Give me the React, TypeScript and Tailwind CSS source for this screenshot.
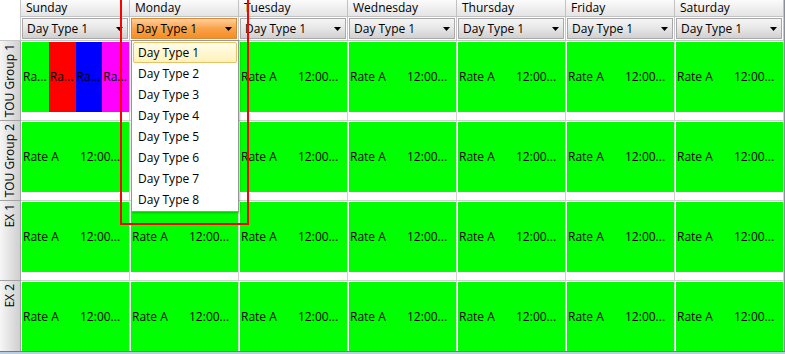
const DAYS = ['Sunday', 'Monday', 'Tuesday', 'Wednesday', 'Thursday', 'Friday', 'Saturday']
const GROUPS = ['TOU Group 1', 'TOU Group 2', 'EX 1', 'EX 2']
const SPLIT = ['bg-[#00ff00]', 'bg-[#ff0000]', 'bg-[#0000ff]', 'bg-[#ff00ff]']

function Arrow() {
  return (
    <svg width="7" height="4" viewBox="0 0 7 4" className="shrink-0">
      <path d="M0 0h7L3.5 4z" fill="#000" />
    </svg>
  )
}

function DayTypeBox({ active }: { active?: boolean }) {
  return (
    <div
      className={
        active
          ? 'flex h-[21px] items-center justify-between border border-[#d88a3c] bg-linear-to-b from-[#ffcf98] via-[#f9a24a] to-[#f68e22] pl-[4px] pr-[4px]'
          : 'flex h-[21px] items-center justify-between border border-[#a9a9a9] bg-linear-to-b from-[#f5f5f5] via-[#e6e6e6] to-[#d0d0d0] pl-[4px] pr-[4px]'
      }
    >
      <span className="leading-none">Day Type 1</span>
      <Arrow />
    </div>
  )
}

function RateCell({ split }: { split?: boolean }) {
  return (
    <div className="h-[80px] border-r border-b border-[#d3d3d3] bg-white pt-px pl-px">
      {split ? (
        <div className="flex h-[70px]">
          {SPLIT.map((c) => (
            <div key={c} className={`flex flex-1 items-center pl-px ${c}`}>
              Ra...
            </div>
          ))}
        </div>
      ) : (
        <div className="flex h-[70px] items-center bg-[#00ff00]">
          <span className="w-[58px] pl-px">Rate A</span>
          <span>12:00...</span>
        </div>
      )}
    </div>
  )
}

export default function App() {
  return (
    <div className="relative h-[354px] w-[785px] overflow-hidden bg-white font-['Open_Sans','Noto_Sans',sans-serif] text-[12px] text-black">
      <div className="h-[351px] overflow-hidden border-r border-[#8a9099]">
        <div className="grid grid-cols-[21px_repeat(7,109px)]">
          {/* header corner */}
          <div className="row-span-2 h-[41px] border-r border-b border-[#c8c8c8] bg-white" />
          {DAYS.map((d) => (
            <div
              key={d}
              className="flex h-[17px] items-center border-r border-b border-[#c2c2c2] bg-linear-to-b from-[#fbfbfb] to-[#e4e4e4] pl-[5px]"
            >
              {d}
            </div>
          ))}
          {DAYS.map((d) => (
            <div key={d} className="h-[24px] border-r border-b border-[#c8c8c8] bg-white px-px pt-px">
              <DayTypeBox active={d === 'Monday'} />
            </div>
          ))}

          {GROUPS.map((g, gi) => (
            <div key={g} className="contents">
              <div className="flex h-[80px] items-start justify-center border-r border-b border-[#a4a4a4] bg-linear-to-r from-[#f6f6f6] to-[#cfcfcf] pt-[3px]">
                <span className="rotate-180 whitespace-nowrap leading-none [writing-mode:vertical-rl]">{g}</span>
              </div>
              {DAYS.map((d, di) => (
                <RateCell key={d} split={gi === 0 && di === 0} />
              ))}
            </div>
          ))}
        </div>
      </div>
      <div className="h-px bg-[#6d7d8f]" />
      <div className="h-[2px] bg-[#b9cde3]" />

      {/* open dropdown list */}
      <div className="absolute left-[131px] top-[40px] w-[108px] border border-[#979797] bg-white p-px shadow-[1px_1px_2px_rgba(0,0,0,0.25)]">
        {[1, 2, 3, 4, 5, 6, 7, 8].map((n) => (
          <div
            key={n}
            className={
              n === 1
                ? 'flex h-[21px] items-center rounded-[2px] border border-[#e5c365] bg-linear-to-b from-[#fffdea] to-[#fff1b8] pl-[4px]'
                : 'flex h-[21px] items-center border border-transparent pl-[4px]'
            }
          >
            Day Type {n}
          </div>
        ))}
      </div>

      {/* red highlight frame */}
      <div className="pointer-events-none absolute left-[120px] top-[-2px] h-[227px] w-[129px] border-2 border-[#ff0000]" />
    </div>
  )
}
